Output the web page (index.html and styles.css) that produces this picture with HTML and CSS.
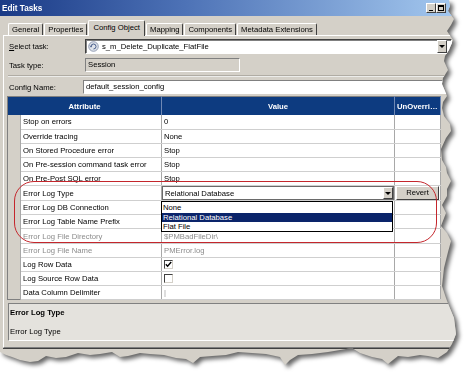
FILE: index.html
```html
<!DOCTYPE html>
<html>
<head>
    <title>Edit Tasks</title>
    <meta name="viewport" content="width=device-width, initial-scale=1">
    <link rel="stylesheet" href="styles.css">
</head>
<body>

    <div class="sheet">
        <div class="dialog">

            <div class="titlebar">
                <span class="title">Edit Tasks</span>
                <span class="winBtns">
                    <span class="winBtn minBtn"></span>
                    <span class="winBtn maxBtn"></span>
                </span>
            </div>

            <div class="tabs">
                <span class="tab">General</span>
                <span class="tab">Properties</span>
                <span class="tab active">Config Object</span>
                <span class="tab">Mapping</span>
                <span class="tab">Components</span>
                <span class="tab">Metadata Extensions</span>
            </div>

            <div class="panel">

                <div class="formRow selectRow">
                    <label><u>S</u>elect task:</label>
                    <div class="combo">
                        <svg class="taskIcon" width="11" height="11" viewBox="0 0 11 11">
                            <circle cx="5.5" cy="5.5" r="4.8" fill="#dfe3ea" stroke="#7d8aa6" stroke-width="0.8"/>
                            <path d="M3 5.5 A2.5 2.5 0 1 1 5.5 8" fill="none" stroke="#4a5f8c" stroke-width="1"/>
                            <path d="M2 4.6 L3 6.2 L4.1 4.7" fill="none" stroke="#4a5f8c" stroke-width="0.8"/>
                        </svg>
                        <span class="comboText">s_m_Delete_Duplicate_FlatFile</span>
                        <span class="dropBtn"><span class="arrowDown"></span></span>
                    </div>
                </div>

                <div class="formRow typeRow">
                    <label>Task type:</label>
                    <div class="readonly">Session</div>
                </div>

                <div class="etched"></div>

                <div class="formRow configRow">
                    <label>Config Name:</label>
                    <div class="textbox">default_session_config</div>
                </div>

                <table class="grid">
                    <colgroup>
                        <col class="colGutter">
                        <col class="colAttr">
                        <col class="colValue">
                        <col class="colOver">
                    </colgroup>
                    <thead>
                        <tr>
                            <th colspan="2">Attribute</th>
                            <th>Value</th>
                            <th class="thLeft">UnOverri…</th>
                        </tr>
                    </thead>
                    <tbody>
                        <tr><td class="gutter"></td><td>Stop on errors</td><td>0</td><td></td></tr>
                        <tr><td class="gutter"></td><td>Override tracing</td><td>None</td><td></td></tr>
                        <tr><td class="gutter"></td><td>On Stored Procedure error</td><td>Stop</td><td></td></tr>
                        <tr><td class="gutter"></td><td>On Pre-session command task error</td><td>Stop</td><td></td></tr>
                        <tr><td class="gutter"></td><td>On Pre-Post SQL error</td><td>Stop</td><td></td></tr>
                        <tr>
                            <td class="gutter"></td>
                            <td>Error Log Type</td>
                            <td class="editCell">
                                <div class="cellCombo">
                                    <span class="comboText">Relational Database</span>
                                    <span class="dropBtn"><span class="arrowDown"></span></span>
                                </div>
                            </td>
                            <td class="editCell"><div class="revertBtn">Revert</div></td>
                        </tr>
                        <tr><td class="gutter"></td><td>Error Log DB Connection</td><td></td><td></td></tr>
                        <tr><td class="gutter"></td><td>Error Log Table Name Prefix</td><td></td><td></td></tr>
                        <tr class="muted"><td class="gutter"></td><td>Error Log File Directory</td><td>$PMBadFileDir\</td><td></td></tr>
                        <tr class="muted"><td class="gutter"></td><td>Error Log File Name</td><td>PMError.log</td><td></td></tr>
                        <tr>
                            <td class="gutter"></td>
                            <td>Log Row Data</td>
                            <td>
                                <span class="checkBox">
                                    <svg width="7" height="7" viewBox="0 0 7 7">
                                        <path d="M0.8 3.2 L2.6 5.2 L6.2 1" fill="none" stroke="#000" stroke-width="1.4"/>
                                    </svg>
                                </span>
                            </td>
                            <td></td>
                        </tr>
                        <tr><td class="gutter"></td><td>Log Source Row Data</td><td><span class="checkBox"></span></td><td></td></tr>
                        <tr><td class="gutter"></td><td>Data Column Delimiter</td><td class="delim">|</td><td></td></tr>
                    </tbody>
                </table>

                <div class="desc">
                    <p class="descTitle">Error Log Type</p>
                    <p>Error Log Type</p>
                </div>
            </div>

            <!-- open drop-down list of the Error Log Type cell -->
            <div class="dropList">
                <div class="opt">None</div>
                <div class="opt sel">Relational Database</div>
                <div class="opt">Flat File</div>
            </div>

            <!-- red highlight drawn over the screenshot -->
            <div class="callout"></div>
        </div>
    </div>

</body>
</html>
```

FILE: styles.css
```css
body {
    margin: 0px;
    background-color: #ffffff;
    font-family: "Liberation Sans", Arial, sans-serif;
    font-size: 7.7px;
    line-height: normal;
    color: #000000;
}

p {
    margin: 0px;
}

table {
    font-size: inherit;
}

.sheet {
    width: 474px;
    height: 383px;
    overflow: hidden;
    filter: drop-shadow(3px 3px 2px rgba(0, 0, 0, 0.6));
}

.dialog {
    position: relative;
    width: 460px;
    height: 368px;
    background-color: #d4d0c8;
    clip-path: polygon(0px 0px, 449px 0px, 450px 6px, 448px 11px, 454px 19px, 451px 25px, 447px 31px, 453px 40px,
        449px 50px, 445px 56px, 444px 61px, 448px 70px, 443px 78px, 442px 84px, 445px 91px, 447px 96px,
        443px 102px, 442px 108px, 444px 116px, 450px 124px, 451px 131px, 446px 138px, 441px 149px,
        442px 160px, 446px 167px, 447px 173px, 451px 181px, 447px 189px, 447px 196px, 442px 205px,
        446px 213px, 441px 226px, 447px 233px, 451px 241px, 448px 252px, 444px 268px, 442px 286px,
        446px 298px, 449px 306px, 454px 318px, 456px 334px, 452px 344px, 447px 352px,
        438px 358px, 428px 356px, 420px 355px, 408px 357px, 398px 356px, 388px 364px, 382px 359px,
        372px 357px, 360px 353px, 352px 348px, 340px 350px, 328px 352px, 312px 354px, 298px 355px,
        290px 360px, 285px 365px, 280px 357px, 266px 354px, 252px 353px, 238px 352px, 226px 355px,
        212px 356px, 200px 357px, 193px 363px, 186px 359px, 176px 358px, 164px 355px, 150px 354px,
        140px 353px, 128px 356px, 120px 357px, 112px 352px, 100px 354px, 90px 355px, 78px 353px,
        66px 357px, 56px 358px, 46px 356px, 38px 361px, 30px 362px, 20px 360px, 12px 357px,
        6px 355px, 0px 352px);
}

/*  === Title bar === */

.titlebar {
    height: 16px;
    display: flex;
    align-items: center;
    justify-content: space-between;
    padding: 0px 14px 0px 2px;
    background-image: linear-gradient(90deg, #1a3a86 0%, #4d72b6 40%, #a6caf0 100%);
    color: #ffffff;
}

.title {
    font-weight: bold;
    font-size: 8.2px;
}

.winBtns {
    display: flex;
}

.winBtn {
    position: relative;
    width: 8px;
    height: 8px;
    background-color: #d4d0c8;
    border: 1px solid;
    border-color: #ffffff #404040 #404040 #ffffff;
}

.minBtn::after {
    content: "";
    position: absolute;
    left: 2px;
    bottom: 1px;
    width: 4px;
    height: 1px;
    background-color: #000000;
}

.maxBtn::after {
    content: "";
    position: absolute;
    left: 1px;
    top: 1px;
    width: 4px;
    height: 3px;
    border: 1px solid #000000;
    border-top-width: 2px;
}

/*  === Tabs === */

.tabs {
    display: flex;
    align-items: flex-end;
    height: 15px;
    margin-top: 4px;
    padding-left: 8px;
}

.tab {
    height: 11px;
    line-height: 11px;
    padding: 0px 3px;
    margin-right: 1px;
    border-top: 1px solid #ffffff;
    border-left: 1px solid #ffffff;
    border-right: 1px solid #404040;
    border-radius: 2px 2px 0px 0px;
    white-space: nowrap;
}

.tab.active {
    position: relative;
    height: 15px;
    line-height: 13px;
    margin-bottom: -1px;
    padding: 0px 4px;
    background-color: #d4d0c8;
    z-index: 2;
}

/*  === Form fields === */

.panel {
    height: 311px;
    margin-left: 3px;
    border-top: 1px solid #ffffff;
    border-left: 1px solid #ffffff;
    border-bottom: 1px solid #808080;
    box-shadow: 0px 1px 0px #404040;
}

.formRow {
    display: flex;
    align-items: center;
}

.formRow label {
    width: 81px;
    flex: none;
    padding-left: 5px;
    box-sizing: border-box;
}

.selectRow {
    height: 15px;
    margin-top: 3px;
}

.typeRow {
    height: 14px;
    margin-top: 4px;
}

.configRow {
    height: 14px;
    margin-top: 3px;
}

.combo {
    display: flex;
    align-items: center;
    width: 367px;
    height: 15px;
    box-sizing: border-box;
    background-color: #ffffff;
    border: 1px solid;
    border-color: #404040 #ffffff #ffffff #404040;
    box-shadow: inset 1px 1px 0px #808080;
}

.taskIcon {
    margin: 0px 3px 0px 2px;
}

.comboText {
    flex: 1;
    white-space: nowrap;
}

.dropBtn {
    display: flex;
    align-items: center;
    justify-content: center;
    width: 10px;
    height: 100%;
    box-sizing: border-box;
    background-color: #d4d0c8;
    border: 1px solid;
    border-color: #ffffff #404040 #404040 #ffffff;
}

.combo .dropBtn {
    margin-right: 4px;
}

.arrowDown {
    width: 0px;
    height: 0px;
    border-left: 3px solid transparent;
    border-right: 3px solid transparent;
    border-top: 3px solid #000000;
}

.readonly {
    width: 155px;
    height: 14px;
    line-height: 12px;
    box-sizing: border-box;
    padding-left: 2px;
    border: 1px solid;
    border-color: #808080 #ffffff #ffffff #808080;
}

.etched {
    height: 0px;
    margin: 3px 4px 0px 4px;
    border-top: 1px solid #b0aca4;
    border-bottom: 1px solid #ececea;
}

.textbox {
    width: 369px;
    height: 14px;
    line-height: 12px;
    margin-left: -2px;
    box-sizing: border-box;
    padding-left: 2px;
    background-color: #ffffff;
    border: 1px solid;
    border-color: #808080 #ffffff #ffffff #808080;
}

/*  === Attribute grid === */

.grid {
    width: 433px;
    margin: 2px 0px 0px 3px;
    table-layout: fixed;
    border-collapse: collapse;
    border: 1px solid #808080;
}

.colGutter {
    width: 13px;
}

.colAttr {
    width: 141px;
}

.colValue {
    width: 233px;
}

.colOver {
    width: 46px;
}

.grid th {
    height: 18px;
    padding: 0px;
    background-color: #0d3b80;
    color: #ffffff;
    font-weight: bold;
    text-align: center;
    border-right: 1px solid #6f88b4;
}

.grid th.thLeft {
    text-align: left;
    padding-left: 2px;
    white-space: nowrap;
    overflow: hidden;
}

.grid tbody tr {
    height: 14.15px;
}

.grid td {
    height: 13px;
    padding: 0px 2px;
    background-color: #ffffff;
    border-bottom: 1px solid #cfcfcf;
    border-right: 1px solid #a8a8a8;
    white-space: nowrap;
    overflow: hidden;
}

.grid td.gutter {
    background-color: #d4d0c8;
    border-bottom: none;
}

.grid td.editCell {
    padding: 0px;
}

.muted td {
    color: #8c8c8c;
}

.delim {
    color: #9a9a9a;
}

.cellCombo {
    display: flex;
    align-items: center;
    height: 14px;
    padding-left: 2px;
    box-sizing: border-box;
    background-color: #ffffff;
    border: 1px solid #6a6a6a;
}

.cellCombo .dropBtn {
    margin-right: 0px;
}

.revertBtn {
    height: 14px;
    line-height: 12px;
    margin: 0px 1px;
    box-sizing: border-box;
    text-align: center;
    background-color: #d4d0c8;
    border: 1px solid;
    border-color: #ffffff #404040 #404040 #ffffff;
}

.checkBox {
    display: inline-flex;
    align-items: center;
    justify-content: center;
    width: 9px;
    height: 9px;
    vertical-align: middle;
    box-sizing: border-box;
    background-color: #ffffff;
    border: 1px solid;
    border-color: #404040 #d4d0c8 #d4d0c8 #404040;
}

/*  === Description === */

.desc {
    height: 38px;
    margin: 3px 0px 0px 4px;
    padding: 4px 0px 0px 1px;
    box-sizing: border-box;
    background-color: #e4e2dd;
    border-top: 1px solid #808080;
    border-left: 1px solid #808080;
    border-bottom: 1px solid #ffffff;
}

.desc p {
    height: 9px;
    line-height: 9px;
}

.descTitle {
    font-weight: bold;
    margin-bottom: 10px !important;
}

/*  === Overlays === */

.dropList {
    position: absolute;
    left: 161px;
    top: 201px;
    width: 232px;
    height: 31px;
    box-sizing: border-box;
    padding-top: 1px;
    background-color: #ffffff;
    border: 1px solid #000000;
}

.opt {
    height: 9.6px;
    line-height: 9.6px;
    padding-left: 1px;
}

.opt.sel {
    background-color: #0a246a;
    color: #ffffff;
}

.callout {
    position: absolute;
    left: 14px;
    top: 181px;
    width: 423px;
    height: 62px;
    box-sizing: border-box;
    border: 1.5px solid #c4262c;
    border-radius: 20px;
}
```
